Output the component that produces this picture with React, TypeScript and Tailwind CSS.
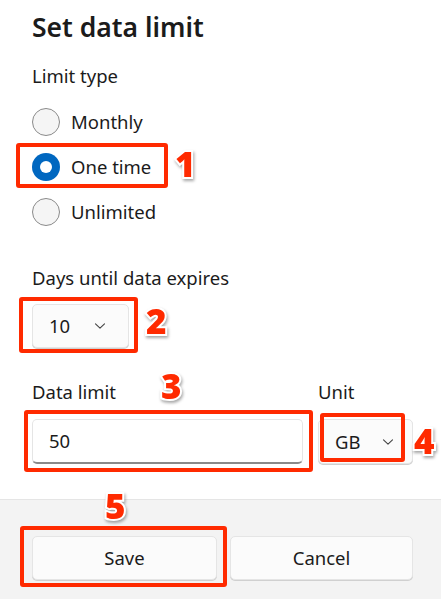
import React from "react";

const font = { fontFamily: '"Noto Sans", "Open Sans", sans-serif' };

function Radio({ checked, label }: { checked?: boolean; label: string }) {
  return (
    <div className="flex h-[45px] items-center">
      {checked ? (
        <div className="flex h-[28px] w-[28px] items-center justify-center rounded-full bg-[#0067c0]">
          <div className="h-[12px] w-[12px] rounded-full bg-white" />
        </div>
      ) : (
        <div className="h-[28px] w-[28px] rounded-full border border-[#8a8a8a] bg-[#f5f5f5]" />
      )}
      <span className="ml-[11px] text-[18.5px] text-[#1b1b1b]">{label}</span>
    </div>
  );
}

function Chevron() {
  return (
    <svg width="12" height="8" viewBox="0 0 12 8" fill="none">
      <path d="M1.5 1.8 L6 6.2 L10.5 1.8" stroke="#444" strokeWidth="1.1" strokeLinecap="round" strokeLinejoin="round" />
    </svg>
  );
}

const numStyle =
  "absolute text-[35px] font-black leading-none text-[#ff2a00] [paint-order:stroke_fill] [-webkit-text-stroke:4px_white] drop-shadow-[1px_2px_1.5px_rgba(0,0,0,0.35)]";

export default function App() {
  return (
    <div className="relative h-[600px] w-[441px] overflow-hidden bg-white" style={font}>
      <div className="pl-8 pr-[28px] pt-[9px]">
        <h1 className="text-[26.5px] font-semibold leading-[36px] text-[#1b1b1b]">Set data limit</h1>
        <div className="mt-[19px] text-[18.5px] leading-[24px] text-[#1b1b1b]">Limit type</div>
        <div className="mt-[11px]">
          <Radio label="Monthly" />
          <Radio label="One time" checked />
          <Radio label="Unlimited" />
        </div>
        <div className="mt-[32px] text-[18.5px] leading-[24px] text-[#1b1b1b]">Days until data expires</div>
        <div className="mt-[14px] flex h-[44px] w-[97px] items-center justify-between rounded-[5px] border border-[#e5e5e5] bg-[#fbfbfb] pl-[16px] pr-[22px] shadow-[0_1px_0_#d0d0d0]">
          <span className="text-[18.5px] text-[#1b1b1b]">10</span>
          <Chevron />
        </div>
        <div className="mt-[32px] flex gap-[15px]">
          <div className="w-[271px] shrink-0">
            <div className="text-[18.5px] leading-[24px] text-[#1b1b1b]">Data limit</div>
            <div className="mt-[15px] flex h-[45px] items-center rounded-[5px] border border-[#e5e5e5] border-b-[2px] border-b-[#8a8a8a] bg-white pl-[16px]">
              <span className="text-[18.5px] text-[#1b1b1b]">50</span>
            </div>
          </div>
          <div className="w-[95px] shrink-0">
            <div className="text-[18.5px] leading-[24px] text-[#1b1b1b]">Unit</div>
            <div className="mt-[15px] flex h-[45px] items-center justify-between rounded-[5px] border border-[#e5e5e5] bg-[#fbfbfb] pl-[16px] pr-[18px] shadow-[0_1px_0_#d0d0d0]">
              <span className="text-[18.5px] text-[#1b1b1b]">GB</span>
              <Chevron />
            </div>
          </div>
        </div>
      </div>
      <div className="mt-[35px] h-[100px] border-t border-[#e5e5e5] bg-[#f3f3f3] pl-8 pr-[28px] pt-[36px]">
        <div className="flex gap-[13px]">
          <button className="h-[44px] w-[185px] shrink-0 rounded-[5px] border border-[#e5e5e5] bg-[#fbfbfb] text-[18.5px] text-[#1b1b1b] shadow-[0_1px_0_#d0d0d0]">Save</button>
          <button className="h-[44px] w-[183px] shrink-0 rounded-[5px] border border-[#e5e5e5] bg-[#fbfbfb] text-[18.5px] text-[#1b1b1b] shadow-[0_1px_0_#d0d0d0]">Cancel</button>
        </div>
      </div>

      {/* annotations */}
      <div className="absolute left-[16px] top-[143px] h-[45px] w-[152px] rounded-[3px] border-[4px] border-[#ff2a00]" />
      <div className={numStyle} style={{ left: 175, top: 146 }}>1</div>
      <div className="absolute left-[19px] top-[297px] h-[56px] w-[119px] rounded-[3px] border-[4px] border-[#ff2a00]" />
      <div className={numStyle} style={{ left: 146, top: 303 }}>2</div>
      <div className={numStyle} style={{ left: 161, top: 368 }}>3</div>
      <div className="absolute left-[24px] top-[410px] h-[62px] w-[289px] rounded-[3px] border-[4px] border-[#ff2a00]" />
      <div className="absolute left-[320px] top-[413px] h-[49px] w-[85px] rounded-[3px] border-[4px] border-[#ff2a00]" />
      <div className={numStyle} style={{ left: 414, top: 423 }}>4</div>
      <div className={numStyle} style={{ left: 105, top: 488 }}>5</div>
      <div className="absolute left-[20px] top-[526px] h-[61px] w-[207px] rounded-[3px] border-[4px] border-[#ff2a00]" />
    </div>
  );
}
